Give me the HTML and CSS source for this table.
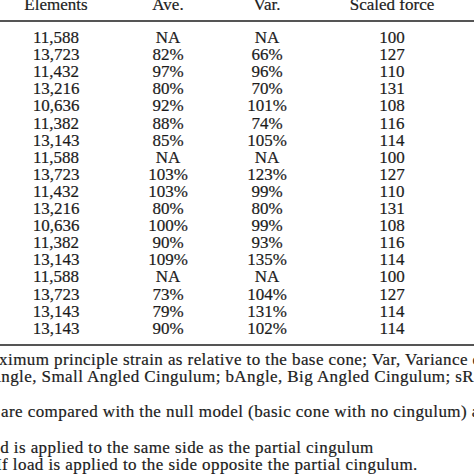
FILE: index.html
```html
<!DOCTYPE html>
<html>
<head>
<meta charset="utf-8">
<link rel="stylesheet" href="styles.css">
</head>
<body>
<div class="page">
  <div class="table">
    <div class="row head"><span>Elements</span><span>Ave.</span><span>Var.</span><span>Scaled force</span></div>
    <div class="body">
      <div class="row"><span>11,588</span><span>NA</span><span>NA</span><span>100</span></div>
      <div class="row"><span>13,723</span><span>82%</span><span>66%</span><span>127</span></div>
      <div class="row"><span>11,432</span><span>97%</span><span>96%</span><span>110</span></div>
      <div class="row"><span>13,216</span><span>80%</span><span>70%</span><span>131</span></div>
      <div class="row"><span>10,636</span><span>92%</span><span>101%</span><span>108</span></div>
      <div class="row"><span>11,382</span><span>88%</span><span>74%</span><span>116</span></div>
      <div class="row"><span>13,143</span><span>85%</span><span>105%</span><span>114</span></div>
      <div class="row"><span>11,588</span><span>NA</span><span>NA</span><span>100</span></div>
      <div class="row"><span>13,723</span><span>103%</span><span>123%</span><span>127</span></div>
      <div class="row"><span>11,432</span><span>103%</span><span>99%</span><span>110</span></div>
      <div class="row"><span>13,216</span><span>80%</span><span>80%</span><span>131</span></div>
      <div class="row"><span>10,636</span><span>100%</span><span>99%</span><span>108</span></div>
      <div class="row"><span>11,382</span><span>90%</span><span>93%</span><span>116</span></div>
      <div class="row"><span>13,143</span><span>109%</span><span>135%</span><span>114</span></div>
      <div class="row"><span>11,588</span><span>NA</span><span>NA</span><span>100</span></div>
      <div class="row"><span>13,723</span><span>73%</span><span>104%</span><span>127</span></div>
      <div class="row"><span>13,143</span><span>79%</span><span>131%</span><span>114</span></div>
      <div class="row"><span>13,143</span><span>90%</span><span>102%</span><span>114</span></div>
    </div>
  </div>
  <div class="notes">
    <p class="note">
      <span class="line l1">maximum principle strain as relative to the base cone; Var, Variance of maximum principle strain</span>
      <span class="line l2">sAngle, Small Angled Cingulum; bAngle, Big Angled Cingulum; sRect, Small Rectangular Cingulum</span>
    </p>
    <p class="note">
      <span class="line l3">are compared with the null model (basic cone with no cingulum) and scaled</span>
    </p>
    <p class="note">
      <span class="line l4">Load is applied to the same side as the partial cingulum</span>
      <span class="line l5">If load is applied to the side opposite the partial cingulum.</span>
    </p>
  </div>
</div>
</body>
</html>
```

FILE: styles.css
```css
html, body {
  margin: 0;
  padding: 0;
  background: #ffffff;
}
body {
  width: 474px;
  height: 474px;
  overflow: hidden;
}
.page {
  width: 474px;
  font-family: "Liberation Serif", "Times New Roman", serif;
  font-size: 17px;
  line-height: 17.1px;
  color: #1c1c1c;
  -webkit-text-stroke: 0.2px #1c1c1c;
  margin-top: -4px;
}
.row {
  display: grid;
  grid-template-columns: 112px 112px 86px 164px;
  height: 17.1px;
  white-space: nowrap;
}
.row span {
  text-align: center;
}
.head {
  padding-bottom: 7px;
  border-bottom: 2px solid #555555;
}
.body {
  padding: 7px 0;
  border-bottom: 2px solid #555555;
}
.notes {
  padding-top: 5px;
  line-height: 17.4px;
  letter-spacing: 0.42px;
}
.note {
  margin: 0 0 17.8px 0;
}
.line {
  display: block;
  white-space: nowrap;
}
.l1 { text-indent: -22.5px; }
.l2 { text-indent: -18.5px; }
.l3 { text-indent: 1px; }
.l4 { text-indent: -27.5px; }
.l5 { text-indent: -4px; }
```
